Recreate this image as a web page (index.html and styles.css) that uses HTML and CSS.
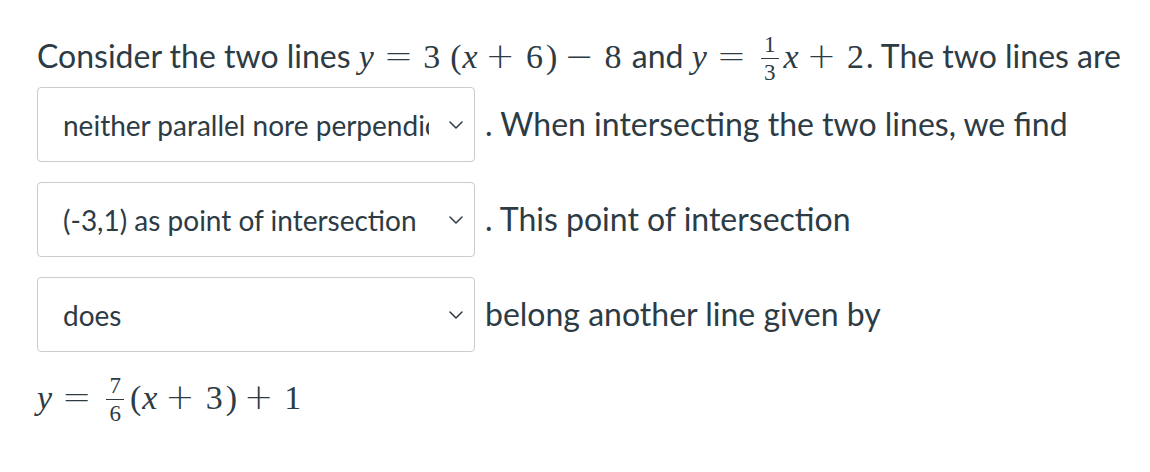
FILE: index.html
```html
<!DOCTYPE html>
<html lang="en">
<head>
<meta charset="utf-8">
<title>Quiz question</title>
<link rel="stylesheet" href="styles.css">
</head>
<body>
<div class="question">
  <div class="line first">Consider the two lines <span class="math"><span class="mi">y</span><span class="mo rel">=</span><span class="mn">3</span><span class="paren open spaced">(</span><span class="mi">x</span><span class="mo bin">+</span><span class="mn">6</span><span class="paren">)</span><span class="mo bin">−</span><span class="mn">8</span></span> and <span class="math"><span class="mi">y</span><span class="mo rel">=</span><span class="frac"><span class="num">1</span><span class="den">3</span></span><span class="mi">x</span><span class="mo bin">+</span><span class="mn">2</span></span>. The two lines are</div>

  <div class="row">
    <span class="select"><span class="value">neither parallel nore perpendicular</span><svg class="chev" viewBox="0 0 14 8" width="14" height="8"><path d="M1 1 L7 7 L13 1" fill="none" stroke="#2D3B45" stroke-width="1.5" stroke-linecap="round" stroke-linejoin="round"/></svg></span><span class="after">. When intersecting the two lines, we find</span>
  </div>

  <div class="row">
    <span class="select"><span class="value">(-3,1) as point of intersection</span><svg class="chev" viewBox="0 0 14 8" width="14" height="8"><path d="M1 1 L7 7 L13 1" fill="none" stroke="#2D3B45" stroke-width="1.5" stroke-linecap="round" stroke-linejoin="round"/></svg></span><span class="after">. This point of intersection</span>
  </div>

  <div class="row">
    <span class="select"><span class="value">does</span><svg class="chev" viewBox="0 0 14 8" width="14" height="8"><path d="M1 1 L7 7 L13 1" fill="none" stroke="#2D3B45" stroke-width="1.5" stroke-linecap="round" stroke-linejoin="round"/></svg></span><span class="after">belong another line given by</span>
  </div>

  <div class="line eq"><span class="math"><span class="mi">y</span><span class="mo rel">=</span><span class="frac"><span class="num">7</span><span class="den">6</span></span><span class="paren">(</span><span class="mi">x</span><span class="mo bin">+</span><span class="mn">3</span><span class="paren">)</span><span class="mo bin">+</span><span class="mn">1</span></span></div>
</div>
</body>
</html>
```

FILE: styles.css
```css
html, body {
  margin: 0;
  padding: 0;
  background: #ffffff;
}

body {
  font-family: Lato, "Noto Sans", sans-serif;
  color: #2D3B45;
}

.question {
  padding: 33px 37px 0 37px;
  font-size: 32px;
}

.line {
  line-height: 40px;
  height: 40px;
  white-space: nowrap;
}

.line.first {
  height: 43px;
}

.row {
  display: flex;
  align-items: baseline;
  margin-top: 20px;
  white-space: nowrap;
}

.first + .row {
  margin-top: 11px;
}

.select {
  display: inline-flex;
  align-items: center;
  box-sizing: border-box;
  width: 438px;
  height: 75px;
  border: 1px solid #C7CDD1;
  border-radius: 4px;
  padding: 0 11px 0 25px;
  margin-right: 10px;
  font-size: 28px;
  background: #fff;
  flex: none;
}

.value {
  flex: 1;
  overflow: hidden;
  white-space: nowrap;
  margin-right: 20px;
}

.chev {
  flex: none;
  display: block;
}

.math {
  font-family: "Liberation Serif", "Times New Roman", serif;
  font-size: 34px;
  white-space: nowrap;
}

.mi {
  font-style: italic;
  margin-right: 2px;
}

.mn {
  margin: 0 2px;
}

.mo {
  font-family: "DejaVu Sans", sans-serif;
  font-weight: 200;
  font-size: 35px;
}

.mo.rel {
  margin: 0 8px;
}

.mo.bin {
  margin: 0 9px 0 6px;
}

.paren {
  margin: 0 1px;
}

.paren.spaced {
  margin-left: 8px;
}

.frac {
  display: inline-flex;
  flex-direction: column;
  align-items: center;
  vertical-align: 16px;
  font-size: 23px;
  line-height: 1;
  margin: 0 5px 0 7px;
}

.num {
  border-bottom: 1px solid #2D3B45;
  padding: 0 3px 2px 3px;
}

.den {
  padding-top: 2px;
}

.eq {
  margin-top: 20px;
  line-height: 50px;
  height: 50px;
}
```
